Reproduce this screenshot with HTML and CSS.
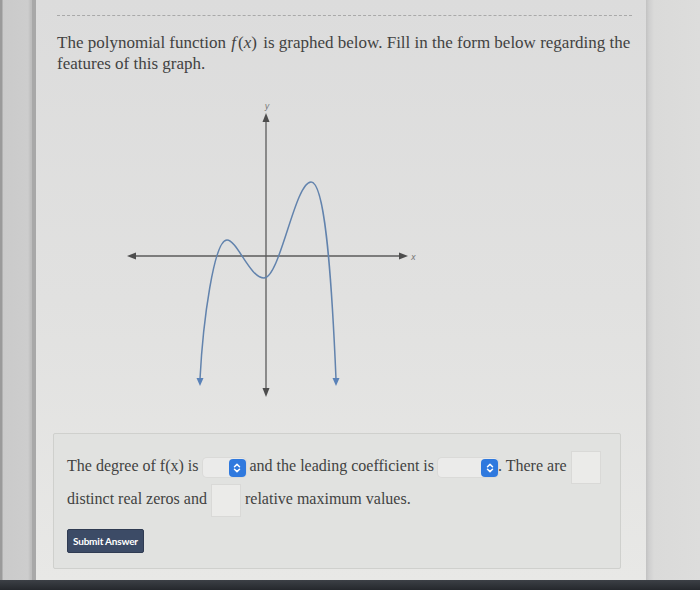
FILE: index.html
```html
<!DOCTYPE html>
<html lang="en">
<head>
<meta charset="utf-8">
<title>Polynomial graph question</title>
<link rel="stylesheet" href="styles.css">
</head>
<body>
<div class="screen">
  <div class="bezel-left"></div>
  <main class="card">
    <div class="dash"></div>
    <p class="question"><span class="q-line">The polynomial function <span class="math"><i class="fn">f</i>(<i>x</i>)</span> is graphed below. Fill in the form below regarding the</span> <span class="q-line">features of this graph.</span></p>
    <div class="graph">
      <svg width="320" height="310" viewBox="110 95 320 310" xmlns="http://www.w3.org/2000/svg">
        <g stroke="#5b5b5b" stroke-width="1.3" fill="none">
          <line x1="133" y1="255" x2="402" y2="255"/>
          <line x1="266" y1="118" x2="266" y2="390"/>
        </g>
        <g fill="#4d4d4d">
          <polygon points="127,255 136,251.5 136,258.5"/>
          <polygon points="408,255 399,251.5 399,258.5"/>
          <polygon points="266,112 262.5,121 269.5,121"/>
          <polygon points="266,396 262.5,387 269.5,387"/>
        </g>
        <text x="267" y="108" class="axis-label" text-anchor="middle">y</text>
        <text x="411" y="259" class="axis-label">x</text>
        <path d="M200,378 C203,320 214,239 227,239 C237,239 250,277 264,277 C280,277 295,181 311,181 C324,181 331,260 336,378" stroke="#6283ad" stroke-width="1.5" fill="none"/>
        <g fill="#5a82b8">
          <polygon points="200,385 196.5,377 203.5,377"/>
          <polygon points="336,385 332.5,377 339.5,377"/>
        </g>
      </svg>
    </div>
    <section class="answer">
      <p class="form-text">The degree of f(x) is <span class="select"><span class="spin"><svg width="10" height="12" viewBox="0 0 10 12"><path d="M2.5,4.8 L5,2.4 L7.5,4.8 M2.5,7.2 L5,9.6 L7.5,7.2" stroke="#fff" stroke-width="1.5" fill="none" stroke-linecap="round" stroke-linejoin="round"/></svg></span></span> and the leading coefficient is <span class="select select-wide"><span class="spin"><svg width="10" height="12" viewBox="0 0 10 12"><path d="M2.5,4.8 L5,2.4 L7.5,4.8 M2.5,7.2 L5,9.6 L7.5,7.2" stroke="#fff" stroke-width="1.5" fill="none" stroke-linecap="round" stroke-linejoin="round"/></svg></span></span>. There are <span class="blank"></span> distinct real zeros and <span class="blank"></span> relative maximum values.</p>
      <button class="submit" type="button">Submit Answer</button>
    </section>
  </main>
  <div class="bezel-right"></div>
</div>
<div class="bottom-band"></div>
</body>
</html>
```

FILE: styles.css
```css
html, body {
  margin: 0;
  padding: 0;
}

body {
  width: 700px;
  height: 590px;
  overflow: hidden;
  background: #c9c9c9;
  font-family: "Liberation Serif", "DejaVu Serif", serif;
  color: #424242;
}

.screen {
  display: flex;
  height: 580px;
}

.bezel-left {
  width: 32px;
  flex: none;
  background: linear-gradient(to right, #9a9a9a 0, #9a9a9a 2px, #cacaca 3px, #cdcdcd 28px, #bdbdbd 31px);
  border-right: 4px solid #a8a8a8;
}

.card {
  width: 593px;
  flex: none;
  padding: 0 0 0 17px;
  background: linear-gradient(to bottom, #dcdcdc 0, #e1e1e0 300px, #e8e8e6 580px);
}

.bezel-right {
  flex: 1;
  background: linear-gradient(to right, #c2c2c2 0, #cfcfcf 3px, #dadad9 8px, #dddddc 100%);
}

.dash {
  margin: 15px 0 0 4px;
  width: 575px;
  border-top: 1px dashed #a9a9a9;
}

.question {
  margin: 16px 0 0 4px;
  width: 585px;
  font-size: 17px;
  line-height: 21px;
}

.q-line {
  display: inline-block;
}

.math {
  display: inline-block;
  padding: 0 2px 0 1px;
}

.math i {
  font-family: "Liberation Serif", serif;
  font-style: italic;
}

.math .fn {
  margin-right: 2px;
}

.graph {
  margin: 0 0 0 57px;
  height: 337px;
}

.graph svg {
  display: block;
  margin-top: 22px;
}

.axis-label {
  font-family: "DejaVu Sans", sans-serif;
  font-size: 8px;
  font-style: italic;
  fill: #777;
}

.answer {
  width: 540px;
  padding: 17px 13px 15px 13px;
  background: #e1e2e0;
  border: 1px solid #cfd0cd;
  border-radius: 2px;
}

.form-text {
  margin: 0;
  font-size: 16px;
  line-height: 30px;
}

.select {
  display: inline-flex;
  justify-content: flex-end;
  align-items: center;
  width: 43px;
  height: 19px;
  vertical-align: middle;
  background: #ebebea;
  border-radius: 4px;
  box-shadow: 0 0 0 1px #dadad8;
}

.select-wide {
  width: 60px;
}

.spin {
  display: flex;
  align-items: center;
  justify-content: center;
  width: 17px;
  height: 18px;
  background: #2f79de;
  border-radius: 4px;
}

.spin svg {
  display: block;
}

.blank {
  display: inline-block;
  width: 28px;
  height: 31px;
  vertical-align: middle;
  background: #ebebe9;
  border: 1px solid #d9d9d7;
}

.submit {
  display: block;
  margin-top: 12px;
  padding: 0 5px;
  height: 24px;
  font-family: Lato, "Liberation Sans", sans-serif;
  font-weight: 700;
  font-size: 10px;
  letter-spacing: -0.2px;
  color: #ffffff;
  background: #3c4b66;
  border: 1px solid #2f3b52;
  border-radius: 2px;
}

.bottom-band {
  height: 10px;
  background: linear-gradient(to bottom, #3c4046, #25282d);
}
```
